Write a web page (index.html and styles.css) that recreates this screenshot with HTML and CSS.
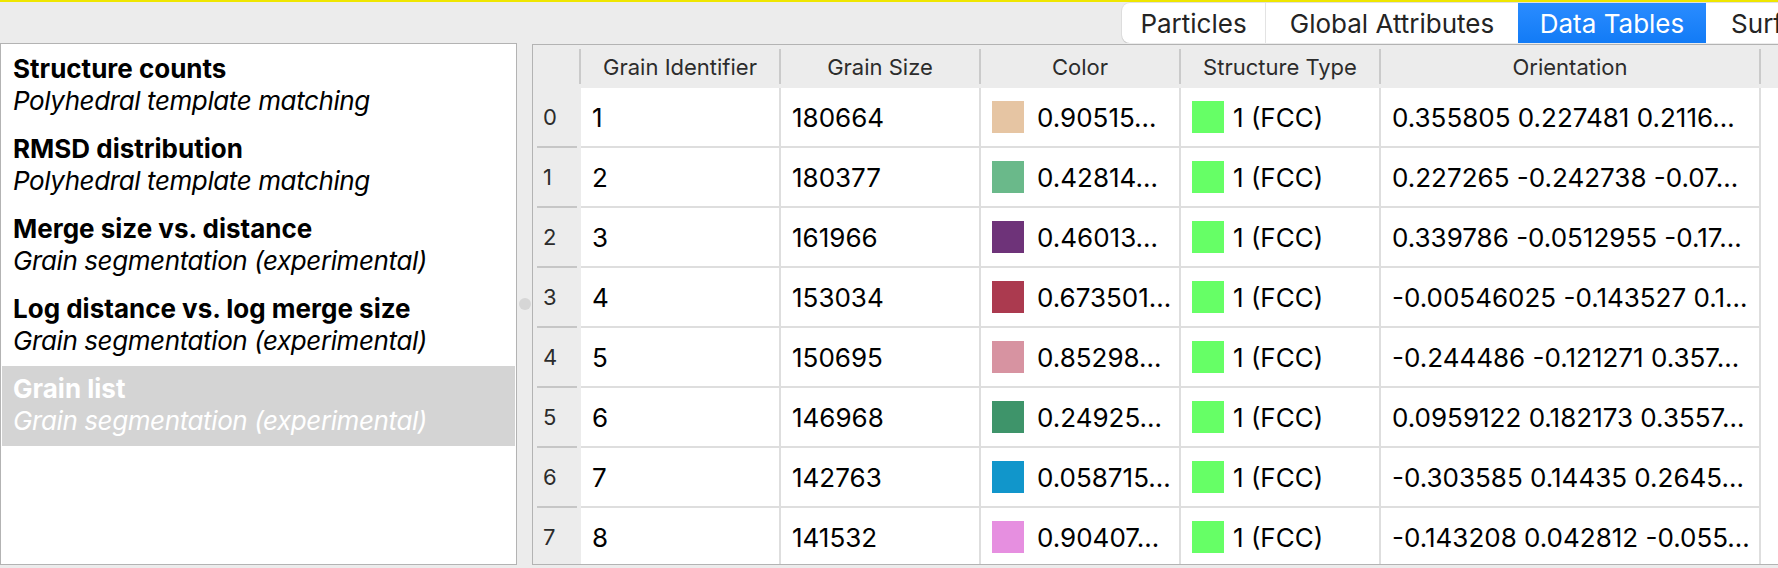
FILE: index.html
```html
<!DOCTYPE html>
<html>
<head>
<meta charset="utf-8">
<link rel="stylesheet" href="styles.css">
</head>
<body>
<div class="topline"></div>
<div class="tabbar">
  <div class="tabs">
    <div class="tab tab-particles">Particles</div>
    <div class="tab tab-global">Global Attributes</div>
    <div class="tab tab-data">Data Tables</div>
    <div class="tab tab-surf">Surfaces</div>
  </div>
</div>
<div class="main">
  <div class="list">
    <div class="item"><div class="title">Structure counts</div><div class="sub">Polyhedral template matching</div></div>
    <div class="item"><div class="title">RMSD distribution</div><div class="sub">Polyhedral template matching</div></div>
    <div class="item"><div class="title">Merge size vs. distance</div><div class="sub">Grain segmentation (experimental)</div></div>
    <div class="item"><div class="title">Log distance vs. log merge size</div><div class="sub">Grain segmentation (experimental)</div></div>
    <div class="item selected"><div class="title">Grain list</div><div class="sub">Grain segmentation (experimental)</div></div>
  </div>
  <div class="splitter"><span class="handle"></span></div>
  <div class="table">
    <div class="thead">
      <div class="hc hc-corner"></div>
      <div class="hc">Grain Identifier</div>
      <div class="hc">Grain Size</div>
      <div class="hc">Color</div>
      <div class="hc">Structure Type</div>
      <div class="hc hc-wide">Orientation</div>
    </div>
    <div class="row">
      <div class="rn"><span class="rn-in">0</span></div>
      <div class="c">1</div><div class="c">180664</div>
      <div class="c"><span class="sw" style="background:#e6c5a3"></span>0.90515…</div>
      <div class="c"><span class="sw sw-st"></span>1 (FCC)</div>
      <div class="c c-wide">0.355805 0.227481 0.2116…</div>
      <div class="fill"></div>
    </div>
    <div class="row">
      <div class="rn"><span class="rn-in">1</span></div>
      <div class="c">2</div><div class="c">180377</div>
      <div class="c"><span class="sw" style="background:#6ab98a"></span>0.42814…</div>
      <div class="c"><span class="sw sw-st"></span>1 (FCC)</div>
      <div class="c c-wide">0.227265 -0.242738 -0.07…</div>
      <div class="fill"></div>
    </div>
    <div class="row">
      <div class="rn"><span class="rn-in">2</span></div>
      <div class="c">3</div><div class="c">161966</div>
      <div class="c"><span class="sw" style="background:#6e3379"></span>0.46013…</div>
      <div class="c"><span class="sw sw-st"></span>1 (FCC)</div>
      <div class="c c-wide">0.339786 -0.0512955 -0.17…</div>
      <div class="fill"></div>
    </div>
    <div class="row">
      <div class="rn"><span class="rn-in">3</span></div>
      <div class="c">4</div><div class="c">153034</div>
      <div class="c"><span class="sw" style="background:#ab3a4f"></span>0.673501…</div>
      <div class="c"><span class="sw sw-st"></span>1 (FCC)</div>
      <div class="c c-wide">-0.00546025 -0.143527 0.1…</div>
      <div class="fill"></div>
    </div>
    <div class="row">
      <div class="rn"><span class="rn-in">4</span></div>
      <div class="c">5</div><div class="c">150695</div>
      <div class="c"><span class="sw" style="background:#d793a1"></span>0.85298…</div>
      <div class="c"><span class="sw sw-st"></span>1 (FCC)</div>
      <div class="c c-wide">-0.244486 -0.121271 0.357…</div>
      <div class="fill"></div>
    </div>
    <div class="row">
      <div class="rn"><span class="rn-in">5</span></div>
      <div class="c">6</div><div class="c">146968</div>
      <div class="c"><span class="sw" style="background:#3e946a"></span>0.24925…</div>
      <div class="c"><span class="sw sw-st"></span>1 (FCC)</div>
      <div class="c c-wide">0.0959122 0.182173 0.3557…</div>
      <div class="fill"></div>
    </div>
    <div class="row">
      <div class="rn"><span class="rn-in">6</span></div>
      <div class="c">7</div><div class="c">142763</div>
      <div class="c"><span class="sw" style="background:#1196cb"></span>0.058715…</div>
      <div class="c"><span class="sw sw-st"></span>1 (FCC)</div>
      <div class="c c-wide">-0.303585 0.14435 0.2645…</div>
      <div class="fill"></div>
    </div>
    <div class="row">
      <div class="rn"><span class="rn-in">7</span></div>
      <div class="c">8</div><div class="c">141532</div>
      <div class="c"><span class="sw" style="background:#e68fe0"></span>0.90407…</div>
      <div class="c"><span class="sw sw-st"></span>1 (FCC)</div>
      <div class="c c-wide">-0.143208 0.042812 -0.055…</div>
      <div class="fill"></div>
    </div>
  </div>
</div>
</body>
</html>
```
FILE: styles.css
```css
* { box-sizing: border-box; }
html, body { margin: 0; padding: 0; }
body {
  width: 1778px;
  height: 568px;
  overflow: hidden;
  background: #ececec;
  font-family: Inter, "Liberation Sans", sans-serif;
  color: #000;
}
.topline { height: 2px; background: #efe600; }

.tabbar {
  height: 41px;
  padding-left: 1122px;
  padding-top: 1px;
  display: flex;
  overflow: hidden;
  white-space: nowrap;
}
.tabs {
  display: flex;
  flex: none;
  height: 40px;
  background: #fff;
  border-radius: 8px 0 0 8px;
  box-shadow: 0 0 0 1px rgba(0,0,0,0.05), 0 1px 1px rgba(0,0,0,0.12);
  overflow: hidden;
}
.tab {
  display: flex;
  align-items: center;
  justify-content: center;
  flex: none;
  font-size: 26px;
  color: #242424;
}
.tab-particles { width: 144px; border-right: 1px solid #e3e3e3; }
.tab-global { width: 252px; }
.tab-data { width: 188px; background: linear-gradient(#2a8cff, #127bf6); color: #fff; }
.tab-surf { width: 160px; }

.main { display: flex; height: 522px; }

.list {
  flex: none;
  width: 517px;
  height: 522px;
  background: #fff;
  border: 1px solid #b3b3b3;
  padding: 2px 1px;
}
.item {
  height: 80px;
  padding: 7px 11px 0;
  font-size: 26px;
  line-height: 32px;
  white-space: nowrap;
}
.item .title { font-weight: 700; }
.item .sub { font-style: italic; letter-spacing: -0.4px; }
.item.selected { background: #d4d4d4; color: #fff; }

.splitter {
  flex: none;
  width: 15px;
  display: flex;
  align-items: center;
  justify-content: center;
}
.handle { width: 12px; height: 12px; border-radius: 50%; background: #d6d6d6; }

.table {
  flex: 1;
  margin-top: 1px;
  height: 521px;
  border: 1px solid #b3b3b3;
  border-right: none;
  background: #fff;
  overflow: hidden;
}
.thead {
  display: flex;
  align-items: center;
  height: 43px;
  background: #ececec;
}
.hc {
  flex: none;
  width: 200px;
  height: 35px;
  border-right: 2px solid #cacaca;
  display: flex;
  align-items: center;
  justify-content: center;
  font-size: 22px;
  color: #2c2c2c;
  white-space: nowrap;
}
.hc-corner { width: 48px; }
.hc-wide { width: 380px; }

.row { display: flex; height: 60px; }
.rn {
  flex: none;
  width: 48px;
  background: #ececec;
  padding: 0 4px;
}
.rn-in {
  display: flex;
  align-items: center;
  height: 100%;
  padding-left: 6px;
  border-bottom: 2px solid #c6c6c6;
  font-size: 22px;
  color: #2c2c2c;
}
.c {
  flex: none;
  width: 200px;
  display: flex;
  align-items: center;
  padding-left: 11px;
  border-right: 2px solid #dedede;
  border-bottom: 2px solid #dedede;
  font-size: 26px;
  white-space: nowrap;
  overflow: hidden;
}
.c-wide { width: 380px; }
.fill { flex: 1; background: #fff; }
.sw { flex: none; width: 32px; height: 32px; margin-right: 13px; }
.sw-st { background: #66ff66; margin-right: 9px; }
```
